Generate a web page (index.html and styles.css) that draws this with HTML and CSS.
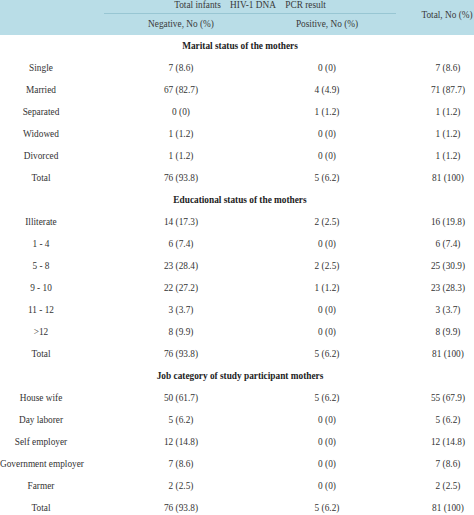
FILE: index.html
```html
<!DOCTYPE html>
<html>
<head>
<meta charset="utf-8">
<link rel="stylesheet" href="styles.css">
</head>
<body>
<table class="tbl">
  <colgroup>
    <col class="c1"><col class="c2"><col class="c3"><col class="c4">
  </colgroup>
  <thead>
    <tr class="h1">
      <th class="lab" rowspan="2"></th>
      <th class="span" colspan="2">Total infants&nbsp;&nbsp;&nbsp; HIV-1 DNA&nbsp;&nbsp;&nbsp; PCR result</th>
      <th class="tot" rowspan="2">Total, No (%)</th>
    </tr>
    <tr class="h2">
      <th>Negative, No (%)</th>
      <th>Positive, No (%)</th>
    </tr>
  </thead>
  <tbody>
    <tr class="sec"><td colspan="4">Marital status of the mothers</td></tr>
    <tr><td class="lab">Single</td><td>7 (8.6)</td><td>0 (0)</td><td class="tot">7 (8.6)</td></tr>
    <tr><td class="lab">Married</td><td>67 (82.7)</td><td>4 (4.9)</td><td class="tot">71 (87.7)</td></tr>
    <tr><td class="lab">Separated</td><td>0 (0)</td><td>1 (1.2)</td><td class="tot">1 (1.2)</td></tr>
    <tr><td class="lab">Widowed</td><td>1 (1.2)</td><td>0 (0)</td><td class="tot">1 (1.2)</td></tr>
    <tr><td class="lab">Divorced</td><td>1 (1.2)</td><td>0 (0)</td><td class="tot">1 (1.2)</td></tr>
    <tr><td class="lab">Total</td><td>76 (93.8)</td><td>5 (6.2)</td><td class="tot">81 (100)</td></tr>
    <tr class="sec"><td colspan="4">Educational status of the mothers</td></tr>
    <tr><td class="lab">Illiterate</td><td>14 (17.3)</td><td>2 (2.5)</td><td class="tot">16 (19.8)</td></tr>
    <tr><td class="lab">1 - 4</td><td>6 (7.4)</td><td>0 (0)</td><td class="tot">6 (7.4)</td></tr>
    <tr><td class="lab">5 - 8</td><td>23 (28.4)</td><td>2 (2.5)</td><td class="tot">25 (30.9)</td></tr>
    <tr><td class="lab">9 - 10</td><td>22 (27.2)</td><td>1 (1.2)</td><td class="tot">23 (28.3)</td></tr>
    <tr><td class="lab">11 - 12</td><td>3 (3.7)</td><td>0 (0)</td><td class="tot">3 (3.7)</td></tr>
    <tr><td class="lab">&gt;12</td><td>8 (9.9)</td><td>0 (0)</td><td class="tot">8 (9.9)</td></tr>
    <tr><td class="lab">Total</td><td>76 (93.8)</td><td>5 (6.2)</td><td class="tot">81 (100)</td></tr>
    <tr class="sec"><td colspan="4">Job category of study participant mothers</td></tr>
    <tr><td class="lab">House wife</td><td>50 (61.7)</td><td>5 (6.2)</td><td class="tot">55 (67.9)</td></tr>
    <tr><td class="lab">Day laborer</td><td>5 (6.2)</td><td>0 (0)</td><td class="tot">5 (6.2)</td></tr>
    <tr><td class="lab">Self employer</td><td>12 (14.8)</td><td>0 (0)</td><td class="tot">12 (14.8)</td></tr>
    <tr><td class="lab">Government employer</td><td>7 (8.6)</td><td>0 (0)</td><td class="tot">7 (8.6)</td></tr>
    <tr><td class="lab">Farmer</td><td>2 (2.5)</td><td>0 (0)</td><td class="tot">2 (2.5)</td></tr>
    <tr><td class="lab">Total</td><td>76 (93.8)</td><td>5 (6.2)</td><td class="tot">81 (100)</td></tr>
  </tbody>
</table>
</body>
</html>
```
FILE: styles.css
```css
html, body {
  margin: 0;
  padding: 0;
  background: #ffffff;
}
body {
  width: 474px;
  height: 515px;
  overflow: hidden;
  font-family: "Liberation Serif", "Times New Roman", serif;
  font-size: 9.3px;
  color: #333333;
}
.tbl {
  width: 474px;
  table-layout: fixed;
  border-collapse: collapse;
  border-spacing: 0;
}
.c1 { width: 104px; }
.c2 { width: 154px; }
.c3 { width: 138px; }
.c4 { width: 78px; }

.tbl th, .tbl td {
  padding: 0;
  text-align: center;
  white-space: nowrap;
  font-weight: normal;
  overflow: visible;
}
.tbl thead th {
  background: #b9dde7;
  color: #3a3a3a;
}
.h1 th {
  height: 13px;
  line-height: 11px;
  vertical-align: top;
  padding-top: 0;
}
.h1 th.span {
  border-bottom: 1px solid #98c6d3;
}
.h2 th {
  height: 21px;
  line-height: 21px;
}
.tbl th.tot {
  vertical-align: middle;
  padding-left: 24px;
  padding-bottom: 5px;
  text-align: center;
}
.tbl tbody td {
  height: 22px;
  line-height: 22px;
}
.tbl td.lab {
  padding-right: 22px;
}
.tbl th.lab {
  padding-right: 22px;
}
.tbl td.tot {
  padding-left: 26px;
}
.sec td {
  font-weight: bold;
  color: #222222;
  padding-left: 6px;
}
```
